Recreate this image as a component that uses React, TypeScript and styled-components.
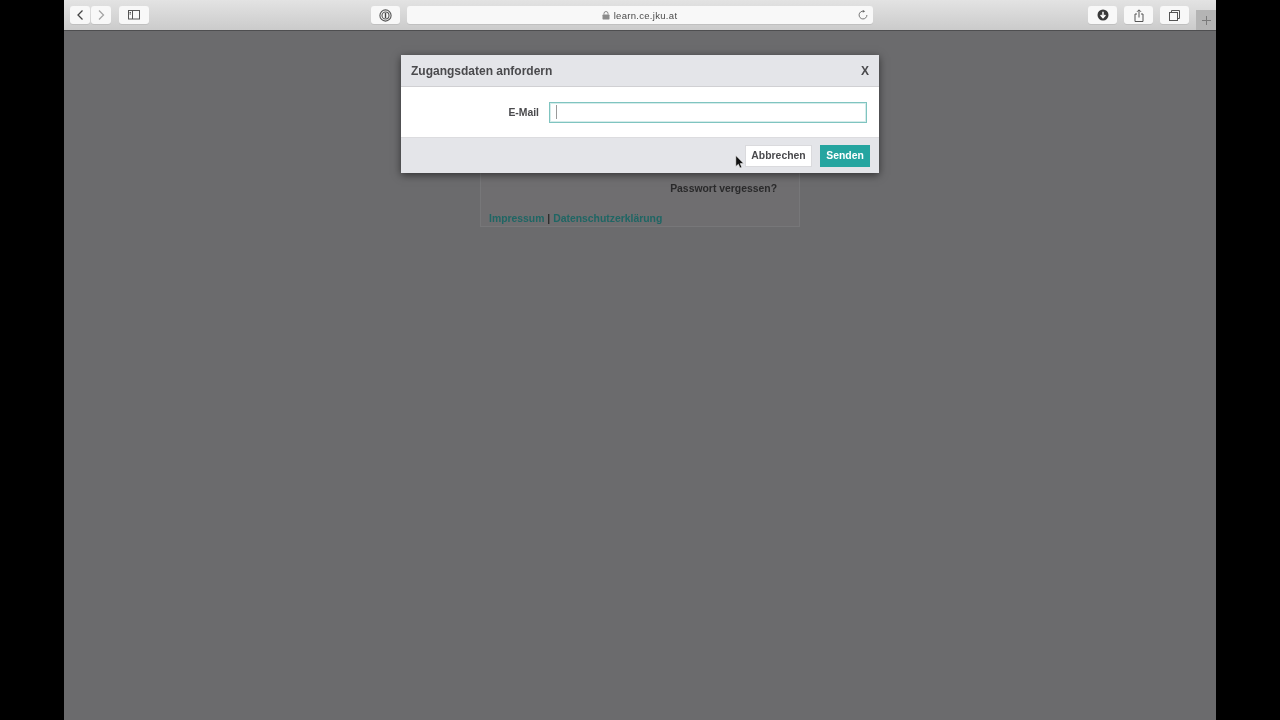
import React from "react";
import styled, { createGlobalStyle } from "styled-components";

const Global = createGlobalStyle`
  html, body { margin: 0; padding: 0; background: #000; height: 100%; overflow: hidden; }
  #root { height: 100%; }
`;

const Stage = styled.div`
  width: 1280px;
  height: 720px;
  display: flex;
  justify-content: center;
  background: #000;
  font-family: "Liberation Sans", Arial, sans-serif;
`;

const Browser = styled.div`
  width: 1152px;
  height: 720px;
  display: flex;
  flex-direction: column;
  overflow: hidden;
  filter: blur(0.3px);
`;

const Toolbar = styled.div`
  height: 30px;
  flex: none;
  box-sizing: border-box;
  padding: 6px 0 0 6px;
  display: flex;
  align-items: flex-start;
  background: linear-gradient(#e3e3e3, #cbcbcb);
`;

const ToolButton = styled.div<{ $w: number; $ml?: number }>`
  width: ${(p) => p.$w}px;
  margin-left: ${(p) => p.$ml ?? 0}px;
  height: 18px;
  flex: none;
  display: flex;
  align-items: center;
  justify-content: center;
  background: #f8f8f8;
  border-radius: 3px;
  box-shadow: 0 1px 0 #c0c0c0;
`;

const UrlBar = styled.div`
  width: 466px;
  height: 18px;
  margin-left: 7px;
  flex: none;
  position: relative;
  display: flex;
  align-items: center;
  justify-content: center;
  gap: 4px;
  background: #f8f8f8;
  border-radius: 3px;
  box-shadow: 0 1px 0 #c0c0c0;
  font-size: 9.5px;
  letter-spacing: 0.3px;
  color: #4a4a4a;
  padding-right: 1px;
  box-sizing: border-box;
`;

const Reload = styled.svg`
  position: absolute;
  right: 5px;
  top: 4px;
`;

const NewTab = styled.div`
  width: 20px;
  height: 20px;
  margin-left: 7px;
  margin-top: 4px;
  flex: none;
  display: flex;
  align-items: center;
  justify-content: center;
  background: #b4b4b4;
`;

const Page = styled.div`
  flex: 1;
  position: relative;
  display: flex;
  flex-direction: column;
  align-items: center;
  border-top: 1px solid #4e4e50;
  background: #6b6b6d;
`;

const LoginBack = styled.div`
  width: 320px;
  height: 136px;
  margin-top: 60px;
  box-sizing: border-box;
  display: flex;
  flex-direction: column;
  justify-content: flex-end;
  border: 1px solid #777779;
  border-top: none;
  background: #6f6e70;
  font-size: 10.4px;
  font-weight: 700;
  padding: 0 7px 1px 8px;
`;

const Forgot = styled.div`
  color: #2a2a2b;
  text-align: right;
  padding-right: 15px;
  margin-bottom: 17px;
  line-height: 13px;
`;

const FooterLinks = styled.div`
  color: #2a2a2b;
  line-height: 13px;
`;

const PageLink = styled.span`
  color: #1f6664;
`;

const Modal = styled.div`
  position: absolute;
  left: 337px;
  top: 24px;
  width: 478px;
  height: 118px;
  display: flex;
  flex-direction: column;
  background: #fff;
  box-shadow: 0 2px 8px rgba(0, 0, 0, 0.55);
  color: #4a4a4d;
  font-weight: 700;
`;

const ModalHead = styled.div`
  height: 32px;
  flex: none;
  box-sizing: border-box;
  padding: 0 10px;
  display: flex;
  align-items: center;
  justify-content: space-between;
  background: #e4e5e9;
  border-bottom: 1px solid #d0d0d3;
  font-size: 12px;
`;

const Close = styled.span`
  font-size: 12px;
`;

const ModalBody = styled.div`
  height: 51px;
  flex: none;
  box-sizing: border-box;
  display: flex;
  align-items: center;
  font-size: 10.4px;
  border-bottom: 1px solid #dcdcdf;
`;

const FieldLabel = styled.label`
  width: 138px;
  flex: none;
  text-align: right;
  margin-right: 10px;
`;

const FieldInput = styled.div`
  width: 318px;
  height: 21px;
  flex: none;
  box-sizing: border-box;
  padding-left: 6px;
  display: flex;
  align-items: center;
  border: 1px solid #7fc4c0;
  box-shadow: inset 0 0 0 1px #d5ecea;
`;

const Caret = styled.div`
  width: 1px;
  height: 14px;
  background: #9a9a9a;
`;

const ModalFoot = styled.div`
  flex: 1;
  position: relative;
  display: flex;
  align-items: center;
  justify-content: flex-end;
  gap: 8px;
  padding-right: 9px;
  background: #e4e5e9;
  font-size: 10.4px;
`;

const CancelButton = styled.div`
  width: 67px;
  height: 22px;
  box-sizing: border-box;
  display: flex;
  align-items: center;
  justify-content: center;
  background: #fff;
  border: 1px solid #dadadd;
`;

const SendButton = styled.div`
  width: 50px;
  height: 22px;
  display: flex;
  align-items: center;
  justify-content: center;
  background: #25a5a0;
  color: #fff;
`;

const Cursor = styled.svg`
  position: absolute;
  left: 334px;
  top: 17px;
`;

const ic = { fill: "none", stroke: "#555", strokeWidth: 1 };

export default function App() {
  return (
    <Stage>
      <Global />
      <Browser>
        <Toolbar>
          <ToolButton $w={20}>
            <svg width="10" height="12" viewBox="0 0 10 12">
              <path d="M7.5 1.5 L3 6 L7.5 10.5" fill="none" stroke="#444" strokeWidth="1.3" />
            </svg>
          </ToolButton>
          <ToolButton $w={20} $ml={1}>
            <svg width="10" height="12" viewBox="0 0 10 12">
              <path d="M3 1.5 L7.5 6 L3 10.5" fill="none" stroke="#a5a5a5" strokeWidth="1.3" />
            </svg>
          </ToolButton>
          <ToolButton $w={30} $ml={8}>
            <svg width="12" height="10" viewBox="0 0 12 10">
              <rect x="0.5" y="0.5" width="11" height="8.5" {...ic} />
              <path d="M4.5 0.5 V9 M1.5 2.5 H3 M1.5 4 H3" {...ic} />
            </svg>
          </ToolButton>
          <ToolButton $w={29} $ml={222}>
            <svg width="13" height="13" viewBox="0 0 13 13">
              <circle cx="6.5" cy="6.5" r="5.6" fill="none" stroke="#555" strokeWidth="1.1" />
              <circle cx="6.5" cy="6.5" r="3.5" fill="none" stroke="#555" strokeWidth="1.1" />
              <rect x="5.8" y="4" width="1.4" height="5" fill="#444" />
            </svg>
          </ToolButton>
          <UrlBar>
            <svg width="8" height="9" viewBox="0 0 8 9">
              <rect x="0.5" y="3.5" width="7" height="5" rx="0.7" fill="#8b8b8b" />
              <path d="M2 3.5 V2.5 A2 2 0 0 1 6 2.5 V3.5" fill="none" stroke="#8b8b8b" />
            </svg>
            <span>learn.ce.jku.at</span>
            <Reload width="10" height="10" viewBox="0 0 10 10">
              <path d="M5.6 1.2 A3.9 3.9 0 1 0 8.9 5" fill="none" stroke="#666" strokeWidth="0.9" />
              <path d="M4.8 0 L7.2 1.3 L4.8 2.8 Z" fill="#666" />
            </Reload>
          </UrlBar>
          <ToolButton $w={29} $ml={215}>
            <svg width="12" height="12" viewBox="0 0 12 12">
              <circle cx="6" cy="6" r="5.5" fill="#3a3a3a" />
              <path d="M6 2.8 V8.4 M3.6 6 L6 8.6 L8.4 6" fill="none" stroke="#fff" strokeWidth="1.5" />
            </svg>
          </ToolButton>
          <ToolButton $w={29} $ml={7}>
            <svg width="10" height="13" viewBox="0 0 10 13">
              <path d="M3 5 H1 V12.5 H9 V5 H7 M5 8.5 V1 M3 2.8 L5 0.8 L7 2.8" {...ic} />
            </svg>
          </ToolButton>
          <ToolButton $w={29} $ml={7}>
            <svg width="11" height="11" viewBox="0 0 11 11">
              <rect x="0.5" y="2.5" width="8" height="8" {...ic} />
              <path d="M2.5 2.5 V0.5 H10.5 V8.5 H8.5" {...ic} />
            </svg>
          </ToolButton>
          <NewTab>
            <svg width="9" height="9" viewBox="0 0 9 9">
              <path d="M4.5 0 V9 M0 4.5 H9" stroke="#7a7a7a" strokeWidth="1" />
            </svg>
          </NewTab>
        </Toolbar>
        <Page>
          <LoginBack>
            <Forgot>Passwort vergessen?</Forgot>
            <FooterLinks>
              <PageLink>Impressum</PageLink> | <PageLink>Datenschutzerklärung</PageLink>
            </FooterLinks>
          </LoginBack>
          <Modal>
            <ModalHead>
              <span>Zugangsdaten anfordern</span>
              <Close>X</Close>
            </ModalHead>
            <ModalBody>
              <FieldLabel>E-Mail</FieldLabel>
              <FieldInput>
                <Caret />
              </FieldInput>
            </ModalBody>
            <ModalFoot>
              <Cursor width="10" height="14" viewBox="0 0 10 14">
                <path d="M0.8 0.5 V11.5 L3.4 9.2 L5 13 L6.8 12.2 L5.2 8.6 L8.6 8.4 Z" fill="#111" stroke="#fff" strokeWidth="0.5" />
              </Cursor>
              <CancelButton>Abbrechen</CancelButton>
              <SendButton>Senden</SendButton>
            </ModalFoot>
          </Modal>
        </Page>
      </Browser>
    </Stage>
  );
}
